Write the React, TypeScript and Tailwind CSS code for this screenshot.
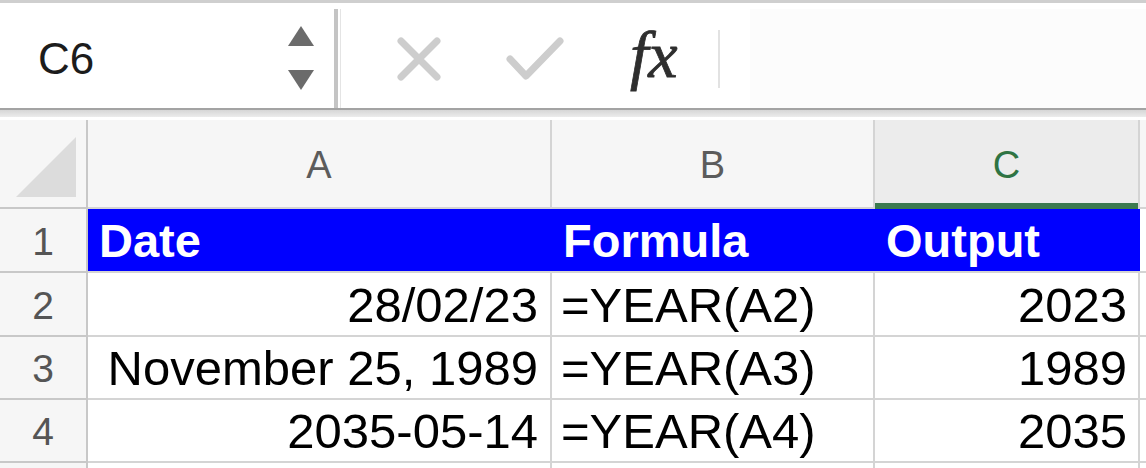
const font = { fontFamily: '"Liberation Sans", Arial, sans-serif' };

function Spinner() {
  return (
    <svg width="30" height="70" viewBox="0 0 30 70" className="text-[#6b6b6b]">
      <polygon points="15,2 28,22 2,22" fill="currentColor" />
      <polygon points="2,46 28,46 15,66" fill="currentColor" />
    </svg>
  );
}

function CancelIcon() {
  return (
    <svg width="46" height="46" viewBox="0 0 46 46">
      <path d="M5 5 L41 41 M41 5 L5 41" stroke="#cdcdcd" strokeWidth="7" strokeLinecap="round" />
    </svg>
  );
}

function EnterIcon() {
  return (
    <svg width="58" height="46" viewBox="0 0 58 46">
      <path d="M4 23 L20 40 L54 5" stroke="#cdcdcd" strokeWidth="7" strokeLinecap="round" strokeLinejoin="round" fill="none" />
    </svg>
  );
}

const rows = [
  { n: "2", a: "28/02/23", b: "=YEAR(A2)", c: "2023", h: "h-[64px]" },
  { n: "3", a: "November 25, 1989", b: "=YEAR(A3)", c: "1989", h: "h-[63px]" },
  { n: "4", a: "2035-05-14", b: "=YEAR(A4)", c: "2035", h: "h-[63px]" },
];

export default function App() {
  return (
    <div className="w-[1146px] h-[468px] overflow-hidden bg-white" style={font}>
      {/* Top edge */}
      <div className="h-[3px] bg-[#cfcfcf]" />
      <div className="h-[6px] bg-white" />

      {/* Formula bar */}
      <div className="h-[99px] flex">
        <div className="w-[338px] flex items-center justify-between pl-[38px] pr-[18px] border-r-4 border-[#c4c4c4]">
          <span className="text-[44px] text-[#1c1c1c] leading-none">C6</span>
          <Spinner />
        </div>
        <div className="w-[2px]" />
        <div className="w-px bg-[#e4e4e4]" />
        <div className="flex items-center">
          <div className="ml-[55px]">
            <CancelIcon />
          </div>
          <div className="ml-[64px]">
            <EnterIcon />
          </div>
          <span
            className="ml-[66px] text-[66px] italic text-[#2e2e2e] leading-none -mt-[8px]"
            style={{ fontFamily: '"Liberation Serif", "Times New Roman", serif', WebkitTextStroke: "0.8px #2e2e2e" }}
          >
            fx
          </span>
          <div className="ml-[40px] w-[2px] h-[58px] bg-[#e2e2e2]" />
        </div>
        <div className="flex-1 ml-[30px] bg-[#fcfcfc]" />
      </div>

      {/* Divider */}
      <div className="h-[2px] bg-[#a3a3a3]" />
      <div className="h-[7px] bg-gradient-to-b from-[#d6d6d6] to-[#ececec]" />
      <div className="h-[3px] bg-white" />

      {/* Grid */}
      <div className="grid grid-cols-[88px_464px_323px_265px_1fr] text-[49px] text-black">
        {/* Header row */}
        <div className="h-[89px] bg-[#f6f6f6] border-r-2 border-b-2 border-[#c8c8c8] flex items-center justify-center">
          <svg width="62" height="60" viewBox="0 0 62 60" className="ml-[8px] mt-[6px]">
            <polygon points="60,0 60,60 0,60" fill="#dcdcdc" />
          </svg>
        </div>
        <div className="h-[89px] bg-[#f6f6f6] border-r-2 border-b-2 border-[#d4d4d4] flex items-center justify-center text-[38px] text-[#5c5c5c] pt-[4px]">
          A
        </div>
        <div className="h-[89px] bg-[#f6f6f6] border-r-2 border-b-2 border-[#d4d4d4] flex items-center justify-center text-[38px] text-[#5c5c5c] pt-[4px]">
          B
        </div>
        <div className="h-[89px] bg-[#ececec] border-r-2 border-[#d4d4d4] flex flex-col">
          <div className="flex-1 flex items-center justify-center text-[38px] text-[#2f7443] pt-[8px]">C</div>
          <div className="h-[6px] bg-[#3c7a4f]" />
        </div>
        <div className="h-[89px] bg-[#f6f6f6] border-b-2 border-[#d4d4d4]" />

        {/* Row 1 */}
        <div className="h-[64px] bg-[#f6f6f6] border-r-2 border-b-2 border-[#c8c8c8] flex items-center justify-center text-[39px] text-[#555] pt-[4px]">
          1
        </div>
        <div className="h-[64px] bg-[#0000ff] border-b-2 border-[#d4d4d4] flex items-center pl-[11px] font-bold text-white text-[47px] pt-[2px]">
          Date
        </div>
        <div className="h-[64px] bg-[#0000ff] border-b-2 border-[#d4d4d4] flex items-center pl-[11px] font-bold text-white text-[47px] pt-[2px]">
          Formula
        </div>
        <div className="h-[64px] bg-[#0000ff] border-b-2 border-[#d4d4d4] flex items-center pl-[11px] font-bold text-white text-[47px] pt-[2px]">
          Output
        </div>
        <div className="h-[64px] border-b-2 border-[#d4d4d4]" />

        {rows.map((r) => (
          <div key={r.n} className="contents">
            <div className={`${r.h} bg-[#f6f6f6] border-r-2 border-b-2 border-[#c8c8c8] flex items-center justify-center text-[39px] text-[#555] pt-[4px]`}>
              {r.n}
            </div>
            <div className={`${r.h} border-r-2 border-b-2 border-[#d4d4d4] flex items-center justify-end pr-[12px] pt-[3px]`}>
              {r.a}
            </div>
            <div className={`${r.h} border-r-2 border-b-2 border-[#d4d4d4] flex items-center pl-[9px] pt-[3px]`}>
              {r.b}
            </div>
            <div className={`${r.h} border-r-2 border-b-2 border-[#d4d4d4] flex items-center justify-end pr-[11px] pt-[3px]`}>
              {r.c}
            </div>
            <div className={`${r.h} border-b-2 border-[#d4d4d4]`} />
          </div>
        ))}

        <div className="h-[20px] bg-[#f6f6f6] border-r-2 border-[#c8c8c8]" />
        <div className="h-[20px] border-r-2 border-[#d4d4d4]" />
        <div className="h-[20px] border-r-2 border-[#d4d4d4]" />
        <div className="h-[20px] border-r-2 border-[#d4d4d4]" />
        <div className="h-[20px]" />
      </div>
    </div>
  );
}
